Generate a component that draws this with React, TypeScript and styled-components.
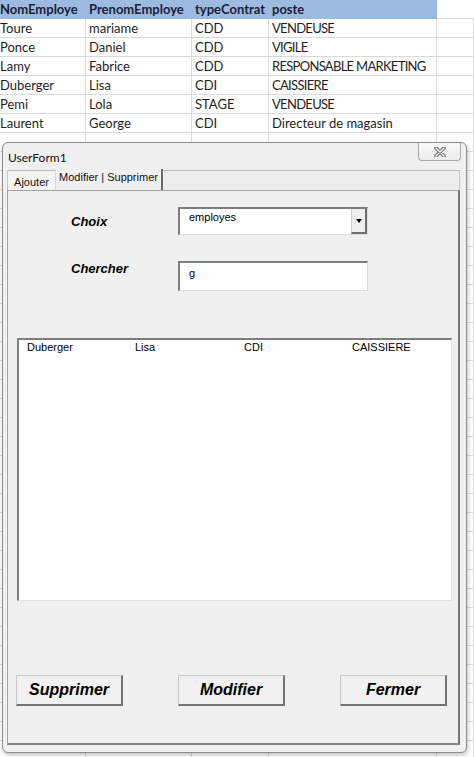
import styled, { createGlobalStyle } from 'styled-components';

const GlobalStyle = createGlobalStyle`
  *, *::before, *::after {
    box-sizing: border-box;
  }
  body {
    margin: 0;
    background: #ffffff;
    overflow: hidden;
  }
`;

const Screen = styled.div`
  position: relative;
  width: 474px;
  height: 757px;
  overflow: hidden;
  background: #ffffff;
`;

const Sheet = styled.div`
  display: flex;
  flex-direction: column;
  font-family: Lato, 'Open Sans', sans-serif;
  font-size: 13px;
  color: #1e1e1e;
`;

const SheetRow = styled.div`
  display: grid;
  grid-template-columns: 86px 106px 77px 168px 1fr;
  height: 19px;
`;

const Cell = styled.div<{ $header?: boolean; $first?: boolean; $extra?: boolean; $caps?: boolean }>`
  display: flex;
  align-items: center;
  padding-left: ${({ $first }) => ($first ? '0' : '3px')};
  white-space: nowrap;
  overflow: hidden;
  letter-spacing: ${({ $caps }) => ($caps ? '-0.7px' : '0')};
  font-weight: ${({ $header }) => ($header ? 700 : 400)};
  color: ${({ $header }) => ($header ? '#1a2238' : '#1e1e1e')};
  background: ${({ $header, $extra }) => ($header && !$extra ? '#9dbae0' : 'transparent')};
  border-bottom: 1px solid ${({ $header, $extra }) => ($header && !$extra ? '#9dbae0' : '#dadada')};
  border-right: ${({ $header }) => ($header ? 'none' : '1px solid #dadada')};
`;

const Window = styled.div`
  position: absolute;
  left: 2px;
  top: 142px;
  width: 465px;
  height: 611px;
  display: flex;
  flex-direction: column;
  padding: 0 6px 7px 4px;
  background: #f0f0f0;
  border: 1px solid #8c8c8c;
  border-radius: 6px;
  box-shadow: 1px 2px 4px rgba(0, 0, 0, 0.25);
`;

const TitleBar = styled.div`
  height: 27px;
  display: flex;
  align-items: flex-start;
  margin-right: -1px;
`;

const Title = styled.div`
  padding: 7px 0 0 1px;
  font-family: Lato, 'Open Sans', sans-serif;
  font-size: 12px;
  color: #111;
`;

const CloseButton = styled.div`
  margin-left: auto;
  width: 43px;
  height: 18px;
  display: flex;
  align-items: center;
  justify-content: center;
  background: linear-gradient(#fafafa, #ececec);
  border: 1px solid #a8a8a8;
  border-top: none;
  border-radius: 0 0 4px 4px;
`;

const TabStrip = styled.div`
  height: 20px;
  display: flex;
  align-items: flex-end;
  background: #ededed;
  border-top: 1px solid #bdbdbd;
  border-left: 1px solid #c4c4c4;
  border-right: 1px solid #c4c4c4;
`;

const Tab = styled.div<{ $active?: boolean; $width: number }>`
  width: ${({ $width }) => $width}px;
  height: ${({ $active }) => ($active ? '21px' : '18px')};
  margin-top: ${({ $active }) => ($active ? '-3px' : '0')};
  display: flex;
  align-items: flex-start;
  justify-content: center;
  padding-top: ${({ $active }) => ($active ? '2px' : '4px')};
  background: ${({ $active }) => ($active ? '#f0f0f0' : '#f5f5f5')};
  border-right: ${({ $active }) => ($active ? '2px solid #6a6a6a' : '1px solid #d6d6d6')};
  font-family: 'Liberation Sans', Arial, sans-serif;
  font-size: 11px;
  color: #111;
  white-space: nowrap;
`;

const Page = styled.div`
  height: 555px;
  display: flex;
  flex-direction: column;
  padding-top: 16px;
  background: #f0f0f0;
  border: 1px solid #a4a4a4;
  border-right: 2px solid #767676;
  border-bottom: 2px solid #858585;
`;

const FieldRow = styled.div<{ $gap?: number }>`
  display: flex;
  align-items: flex-start;
  margin-left: 63px;
  margin-top: ${({ $gap }) => $gap ?? 0}px;
`;

const FieldLabel = styled.div<{ $offset: number }>`
  width: 107px;
  padding-top: ${({ $offset }) => $offset}px;
  line-height: 16px;
  font-family: 'Liberation Sans', Arial, sans-serif;
  font-size: 13px;
  font-weight: 700;
  font-style: italic;
  color: #000;
`;

const Sunken = styled.div<{ $height: number }>`
  width: 190px;
  height: ${({ $height }) => $height}px;
  display: flex;
  background: #ffffff;
  border-top: 2px solid #7d7d7d;
  border-left: 2px solid #7d7d7d;
  border-right: 1px solid #dedede;
  border-bottom: 1px solid #dedede;
`;

const FieldText = styled.div<{ $top: number }>`
  flex: 1;
  padding: ${({ $top }) => $top}px 0 0 9px;
  font-family: 'Liberation Sans', Arial, sans-serif;
  font-size: 11px;
  color: #000;
`;

const DropButton = styled.div`
  width: 16px;
  display: flex;
  align-items: center;
  justify-content: center;
  background: #efefef;
  border-left: 1px solid #cfcfcf;
  border-right: 2px solid #6e6e6e;
  border-bottom: 2px solid #6e6e6e;

  &::after {
    content: '';
    border-left: 3.5px solid transparent;
    border-right: 3.5px solid transparent;
    border-top: 4px solid #000;
  }
`;

const ListBox = styled.div`
  margin: 47px 0 0 9px;
  width: 435px;
  height: 263px;
  background: #ffffff;
  border-top: 2px solid #7d7d7d;
  border-left: 2px solid #7d7d7d;
  border-right: 1px solid #e2e2e2;
  border-bottom: 1px solid #e2e2e2;
  padding: 1px 0 0 8px;
`;

const ListRow = styled.div`
  display: grid;
  grid-template-columns: 108px 109px 108px 1fr;
  font-family: 'Liberation Sans', Arial, sans-serif;
  font-size: 11px;
  line-height: 13px;
  color: #000;
`;

const ButtonRow = styled.div`
  display: flex;
  gap: 55px;
  margin: 74px 0 0 8px;
`;

const FormButton = styled.button`
  width: 107px;
  height: 31px;
  padding: 0;
  background: #f1f1f1;
  border-top: 1px solid #cacaca;
  border-left: 1px solid #cacaca;
  border-right: 2px solid #747474;
  border-bottom: 2px solid #747474;
  border-radius: 0;
  font-family: 'Liberation Sans', Arial, sans-serif;
  font-size: 16px;
  font-weight: 700;
  font-style: italic;
  color: #000;
`;

const employees = [
  ['Toure', 'mariame', 'CDD', 'VENDEUSE'],
  ['Ponce', 'Daniel', 'CDD', 'VIGILE'],
  ['Lamy', 'Fabrice', 'CDD', 'RESPONSABLE MARKETING'],
  ['Duberger', 'Lisa', 'CDI', 'CAISSIERE'],
  ['Pemi', 'Lola', 'STAGE', 'VENDEUSE'],
  ['Laurent', 'George', 'CDI', 'Directeur de magasin'],
];

const headers = ['NomEmploye', 'PrenomEmploye', 'typeContrat', 'poste'];

const isLongCaps = (value: string) => value.length > 5 && value === value.toUpperCase();

const CloseIcon = () => (
  <svg width="12" height="10" viewBox="0 0 12 10">
    <path d="M2 1 L10 9 M10 1 L2 9" stroke="#6d6d6d" strokeWidth="3.6" strokeLinecap="round" />
    <path d="M2 1 L10 9 M10 1 L2 9" stroke="#ffffff" strokeWidth="1.4" strokeLinecap="round" />
  </svg>
);

const App = () => {
  const blankRows = Array.from({ length: 33 }, (_, i) => i);

  return (
    <Screen>
      <GlobalStyle />
      <Sheet>
        <SheetRow>
          {headers.map((h, i) => (
            <Cell key={h} $header $first={i === 0}>
              {h}
            </Cell>
          ))}
          <Cell $header $extra />
        </SheetRow>
        {employees.map((row) => (
          <SheetRow key={row[0]}>
            {row.map((value, i) => (
              <Cell key={i} $first={i === 0} $caps={i === 3 && isLongCaps(value)}>
                {value}
              </Cell>
            ))}
            <Cell />
          </SheetRow>
        ))}
        {blankRows.map((r) => (
          <SheetRow key={`blank-${r}`}>
            <Cell $first />
            <Cell />
            <Cell />
            <Cell />
            <Cell />
          </SheetRow>
        ))}
      </Sheet>

      <Window>
        <TitleBar>
          <Title>UserForm1</Title>
          <CloseButton>
            <CloseIcon />
          </CloseButton>
        </TitleBar>
        <TabStrip>
          <Tab $width={48}>Ajouter</Tab>
          <Tab $width={107} $active>
            Modifier | Supprimer
          </Tab>
        </TabStrip>
        <Page>
          <FieldRow>
            <FieldLabel $offset={7}>Choix</FieldLabel>
            <Sunken $height={28}>
              <FieldText $top={2}>employes</FieldText>
              <DropButton />
            </Sunken>
          </FieldRow>
          <FieldRow $gap={26}>
            <FieldLabel $offset={0}>Chercher</FieldLabel>
            <Sunken $height={30}>
              <FieldText $top={4}>g</FieldText>
            </Sunken>
          </FieldRow>
          <ListBox>
            <ListRow>
              <span>Duberger</span>
              <span>Lisa</span>
              <span>CDI</span>
              <span>CAISSIERE</span>
            </ListRow>
          </ListBox>
          <ButtonRow>
            <FormButton>Supprimer</FormButton>
            <FormButton>Modifier</FormButton>
            <FormButton>Fermer</FormButton>
          </ButtonRow>
        </Page>
      </Window>
    </Screen>
  );
};

export default App;
